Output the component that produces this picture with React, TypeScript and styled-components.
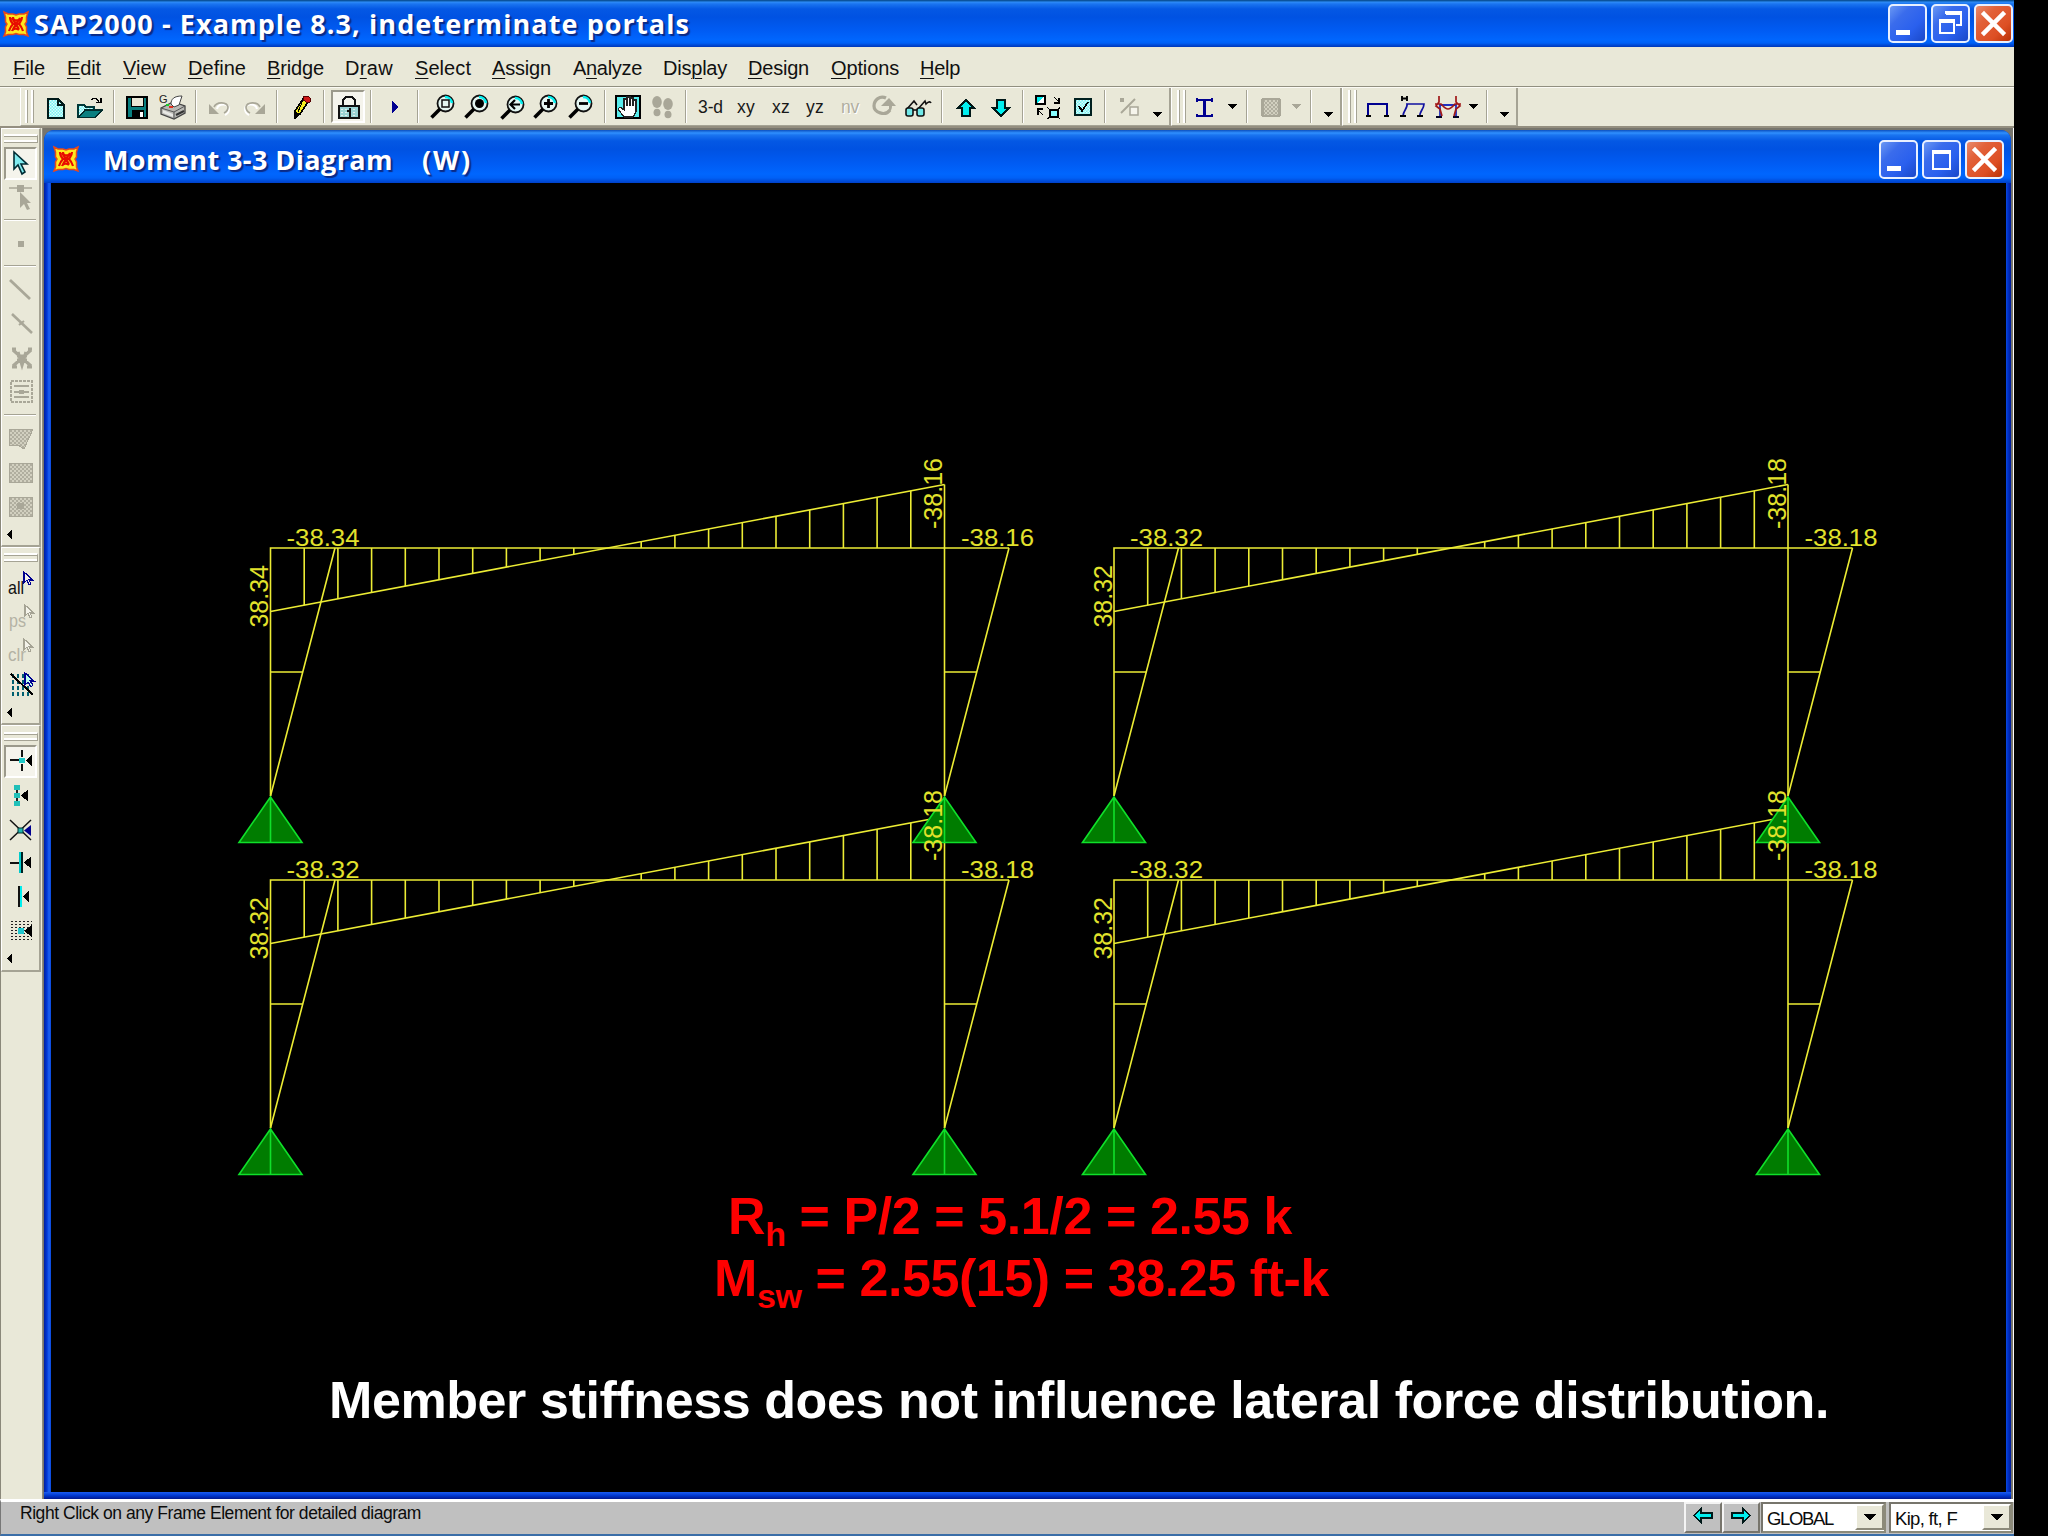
import React, { ReactNode, useLayoutEffect, useRef, useState } from 'react';
import styled, { createGlobalStyle, css } from 'styled-components';

const SANS = '"Liberation Sans", Arial, sans-serif';
const CAPTION = '"Open Sans", "Noto Sans", sans-serif';
const FACE = '#e9e8d8';
const SHADE = '#a5a394';
const GREY = '#a9a798';
const CYAN = '#00f0f0';
const NAVY = '#000090';

const Global = createGlobalStyle`
  html, body { margin: 0; padding: 0; background: #000; overflow: hidden; }
  * { box-sizing: border-box; }
`;

/* ---------- text tracked out to a given width ---------- */

const FitSpan = styled.span`
  display: inline-block;
  white-space: pre;
`;

function Fit({ width, children }: { width: number; children: ReactNode }) {
  const ref = useRef<HTMLSpanElement>(null);
  const [spacing, setSpacing] = useState(0);
  useLayoutEffect(() => {
    const el = ref.current;
    if (!el) return;
    const count = (el.textContent || '').length || 1;
    el.style.letterSpacing = '0px';
    const value = (width - el.getBoundingClientRect().width) / count;
    el.style.letterSpacing = value + 'px';
    setSpacing(value);
  }, [width]);
  return <FitSpan ref={ref} style={{ letterSpacing: spacing }}>{children}</FitSpan>;
}

/* Turns start/size pairs into the gap that precedes each item. */
type Item = { at: number; size: number; node: ReactNode };
const withGaps = <T extends { at: number; size: number }>(items: T[], origin: number) => {
  let end = origin;
  return items.map((item) => {
    const gap = item.at - end;
    end = item.at + item.size;
    return { ...item, gap };
  });
};

/* ---------- shell ---------- */

const Screen = styled.div`
  width: 2048px;
  height: 1536px;
  background: #000;
  font-family: ${SANS};
`;

const AppWindow = styled.div`
  width: 2014px;
  height: 1536px;
  display: flex;
  flex-direction: column;
  background: ${FACE};
`;

const TitleBar = styled.header`
  height: 47px;
  flex: none;
  display: flex;
  align-items: center;
  padding: 0 1px 0 4px;
  background: linear-gradient(#0b4c90 0, #0b5aa8 1px, #2f8cf8 2px, #1a74f0 4px, #0458e4 9px, #0052e2 17px, #005cf4 31px, #0066fe 40px, #0060f6 43px, #0040c8 46px, #0038b8 47px);
`;

const Caption = styled.div<{ $gap: number }>`
  margin-left: ${(p) => p.$gap}px;
  font: 700 27px/40px ${CAPTION};
  color: #fff;
  text-shadow: 2px 2px 1px #0a2a86;
  white-space: pre;
`;

const ChildCaptions = styled.div`
  display: flex;
  padding-top: 2px;
`;

const WindowButtons = styled.div`
  display: flex;
  gap: 4px;
  margin-left: auto;
`;

const WindowButton = styled.button<{ $close?: boolean }>`
  width: 39px;
  height: 39px;
  padding: 0;
  border: 2px solid #e8f0ff;
  border-radius: 5px;
  display: block;
  background: ${(p) =>
    p.$close
      ? 'linear-gradient(135deg, #e88a6c 0, #e2623a 30%, #dd4f24 70%, #b83208 100%)'
      : 'linear-gradient(135deg, #6a98f4 0, #3a6cec 30%, #2a60ee 65%, #1a48c8 100%)'};
`;

const MenuBar = styled.nav`
  height: 40px;
  flex: none;
  display: flex;
  align-items: center;
  padding-top: 3px;
  border-bottom: 1px solid #918f80;
  font-size: 20px;
  color: #111;
`;

const Gap = styled.div<{ $gap: number; $size: number }>`
  margin-left: ${(p) => p.$gap}px;
  width: ${(p) => p.$size}px;
  flex: none;
  white-space: nowrap;
`;

const Key = styled.span`
  text-decoration: underline;
  text-decoration-thickness: 1px;
  text-underline-offset: 3px;
`;

const ToolArea = styled.div`
  height: 41px;
  flex: none;
  display: flex;
  padding-left: 20px;
  border-top: 1px solid #fbfaf4;
  border-bottom: 2px solid #948f80;
`;

const Strip = styled.div<{ $width: number }>`
  width: ${(p) => p.$width}px;
  height: 38px;
  flex: none;
  display: flex;
  align-items: center;
  border-left: 1px solid #fff;
  border-right: 2px solid ${SHADE};
  border-bottom: 1px solid ${SHADE};
`;

const Tool = styled.div<{ $gap: number; $size: number }>`
  margin-left: ${(p) => p.$gap}px;
  width: ${(p) => p.$size}px;
  flex: none;
  display: flex;
  align-items: center;
  justify-content: center;
`;

const Divider = styled.i`
  width: 2px;
  height: 33px;
  border-left: 1px solid ${SHADE};
  border-right: 1px solid #fff;
`;

const Grip = styled.i`
  width: 9px;
  height: 33px;
  border: solid #fff;
  border-width: 0 0 0 2px;
  box-shadow: inset -1px 0 0 ${SHADE}, inset -3px 0 0 #fff, inset 1px 0 0 ${SHADE};
`;

const pressed = css`
  background: #f5f4ec;
  border: 2px solid;
  border-color: #9b998b #fff #fff #9b998b;
`;

const PressedTool = styled.div`
  ${pressed}
  width: 34px;
  height: 33px;
  padding-left: 2px;
  display: flex;
  align-items: center;
  justify-content: center;
`;

const ToolText = styled.span<{ $off?: boolean }>`
  font-size: 17.5px;
  line-height: 26px;
  color: ${(p) => (p.$off ? '#b0ae9f' : '#181818')};
  text-shadow: ${(p) => (p.$off ? '1px 1px 0 #fff' : 'none')};
`;

const Body = styled.div`
  display: flex;
  height: 1371px;
  flex: none;
`;

const SideBar = styled.aside`
  width: 42px;
  flex: none;
  display: flex;
  flex-direction: column;
  border-left: 1px solid #8a887a;
`;

const SidePanel = styled.div<{ $height: number }>`
  height: ${(p) => p.$height}px;
  width: 40px;
  flex: none;
  display: flex;
  flex-direction: column;
  border-top: 1px solid #fff;
  border-left: 1px solid #fff;
  border-right: 2px solid ${SHADE};
  border-bottom: 2px solid ${SHADE};
`;

const SideTool = styled.div<{ $gap: number; $size: number; $left: number }>`
  margin-top: ${(p) => p.$gap}px;
  margin-left: ${(p) => p.$left - 2}px;
  height: ${(p) => p.$size}px;
  flex: none;
  display: flex;
`;

const SideGrip = styled.i`
  width: 34px;
  height: 9px;
  border-top: 2px solid #fff;
  border-right: 1px solid ${SHADE};
  box-shadow: inset 0 1px 0 ${SHADE}, inset 0 -1px 0 ${SHADE}, inset 0 -3px 0 #fff;
`;

const SideRule = styled.i`
  width: 32px;
  height: 2px;
  background: ${SHADE};
  border-bottom: 1px solid #fff;
`;

const SidePressed = styled.div`
  ${pressed}
  width: 33px;
  height: 33px;
  padding: 1px 0 0 4px;
`;

const Mdi = styled.main`
  flex: 1;
  padding: 2px 2px 0 1px;
  border-left: 1px solid #8c8a80;
  border-right: 1px solid #fff;
  background: #77756c;
`;

const ChildWindow = styled.section`
  width: 1967px;
  height: 1369px;
  display: flex;
  flex-direction: column;
  border-radius: 10px 10px 0 0;
  background: linear-gradient(90deg, #0020a0 0, #0038d8 3px, #1d62f2 5px, #0a48dc 7px, #0038d0 50%, #0a4ae0 1962px, #0030c8 1964px, #001c98 1967px);
  overflow: hidden;
`;

const ChildTitle = styled.div`
  height: 53px;
  flex: none;
  display: flex;
  align-items: center;
  padding: 5px 7px 0 10px;
  background: linear-gradient(#0b50c0 0, #3090ff 3px, #1a74f0 5px, #0458e4 11px, #0052e2 19px, #005cf4 34px, #0066fe 44px, #0060f6 48px, #0040c8 53px);
`;

const Viewport = styled.div`
  margin-left: 7px;
  width: 1955px;
  height: 1309px;
  flex: none;
  display: grid;
  grid-template: 1309px / 1955px;
  background: #000;
  > * {
    grid-area: 1 / 1;
  }
`;

const ChildFoot = styled.div`
  height: 7px;
  background: linear-gradient(#1a5cf0, #0038d0 50%, #001890);
`;

const Notes = styled.div`
  padding-top: 1002px;
  font-weight: 700;
  font-size: 52px;
  line-height: 62px;
`;

const Note = styled.p<{ $left: number; $top?: number; $color: string }>`
  margin: ${(p) => p.$top || 0}px 0 0 ${(p) => p.$left}px;
  height: 62px;
  color: ${(p) => p.$color};
  white-space: pre;
`;

const Sub = styled.span`
  font-size: 34px;
  line-height: 0;
  vertical-align: -12px;
`;

const StatusBar = styled.footer`
  height: 37px;
  flex: none;
  display: flex;
  padding-right: 1px;
  border-top: 3px solid #fff;
  border-bottom: 2px solid #3a6ea8;
  background: #c0c0c0;
  border-left: 1px solid #777;
`;

const StatusText = styled.div`
  flex: 1;
  padding-left: 19px;
  font-size: 17.5px;
  line-height: 22px;
  color: #0c0c0c;
`;

const StatusButton = styled.div`
  width: 38px;
  height: 31px;
  display: flex;
  justify-content: center;
  padding: 3px 1px 0 0;
  border: 2px solid;
  border-color: #f4f4f4 #77756c #77756c #f4f4f4;
`;

const Combo = styled.div<{ $width: number; $gap: number }>`
  width: ${(p) => p.$width}px;
  height: 31px;
  margin-left: ${(p) => p.$gap}px;
  display: flex;
  justify-content: space-between;
  border: 2px solid;
  border-color: #77756c #8c8a7a #8c8a7a #77756c;
  padding-left: 4px;
  background: #fff;
  font-size: 18.5px;
  line-height: 30px;
  color: #0c0c0c;
`;

const ComboButton = styled.div`
  width: 29px;
  height: 26px;
  display: flex;
  align-items: center;
  justify-content: center;
  background: ${FACE};
  border: 2px solid;
  border-color: #fff #8c8a7a #8c8a7a #fff;
`;

/* ---------- icons ---------- */

const Drawing = styled.svg`
  display: block;
  flex: none;
  overflow: visible;
`;

const Ico = ({ w = 26, h = 26, soft, children }: { w?: number; h?: number; soft?: boolean; children: ReactNode }) => (
  <Drawing width={w} height={h} viewBox={`0 0 ${w} ${h}`} fill="none" shapeRendering={soft ? 'auto' : 'crispEdges'}>
    {children}
  </Drawing>
);

const PatternStore = styled.svg`
  position: absolute;
  width: 0;
  height: 0;
`;

const Patterns = () => (
  <PatternStore>
    <defs>
      <pattern id="aqua" width="3" height="3" patternUnits="userSpaceOnUse">
        <rect width="3" height="3" fill="#74f4f4" />
        <rect width="1.5" height="1.5" fill="#dffcfc" />
        <rect x="1.5" y="1.5" width="1.5" height="1.5" fill="#dffcfc" />
      </pattern>
      <pattern id="mesh" width="4" height="4" patternUnits="userSpaceOnUse">
        <rect width="4" height="4" fill="#d2d0c0" />
        <rect width="2" height="2" fill="#b0ae9f" />
        <rect x="2" y="2" width="2" height="2" fill="#b0ae9f" />
      </pattern>
    </defs>
  </PatternStore>
);

const AppIcon = () => (
  <Ico w={24} h={24} soft>
    <path d="M0 0 4 2h5l3 1 3-1h5l4-2-1.500 5v5L21 12l1.500 3v5L24 24l-4-1.500h-5l-3-1-3 1H4L0 24l1.500-4v-5L3 12 1.500 10V5z" fill="#ffe81e" stroke="#e8481c" strokeWidth="1.500" />
    <path d="M6 5c0 3 1 5 3 7-2 2-3 4-4 7M18 5c0 3-2 5-3 7 2 2 3 4 4 7M9 5c0 3 2 4 5 3M8 19c1-3 5-3 7-1M8 12h7M8 6l7 11M16 6 9 17" stroke="#e80c00" strokeWidth="2.200" />
  </Ico>
);

const MinIcon = () => (
  <Ico w={35} h={35}><rect x="6" y="24" width="14" height="5" fill="#fff" /></Ico>
);
const MaxIcon = () => (
  <Ico w={35} h={35}><path d="M9 11V27H26V11" stroke="#fff" strokeWidth="2" /><rect x="8" y="8" width="19" height="4" fill="#fff" /></Ico>
);
const RestoreIcon = () => (
  <Ico w={35} h={35}>
    <path d="M13 8V5.500h15V19h-5M13 7h15" stroke="#fff" strokeWidth="2" />
    <path d="M6 14h16M7 14v12.500h14V14" stroke="#fff" strokeWidth="2" />
    <path d="M13 6.500h15M6 14.500h16" stroke="#fff" strokeWidth="4" />
  </Ico>
);
const CloseIcon = () => (
  <Ico w={35} h={35} soft><path d="M8 8 27 27M27 8 8 27" stroke="#fff" strokeWidth="4.500" strokeLinecap="square" /></Ico>
);

const NewIcon = () => (
  <Ico w={18}><path d="M1 5h10l6 6v13H1z" fill="url(#aqua)" stroke="#001a1a" strokeWidth="1.600" /><path d="M11 5v6h6" stroke="#001a1a" strokeWidth="1.500" /></Ico>
);
const OpenIcon = () => (
  <Ico w={26}>
    <path d="M1 23V11h6l2 2h8v4" fill="url(#aqua)" stroke="#003838" strokeWidth="1.500" />
    <path d="M1 23.500 8 16h17l-7 7.500z" fill="#087f7f" stroke="#002c2c" strokeWidth="1.500" />
    <path d="M14 6c3-3 7-2 8 3M19 8.500h5V4" stroke="#000" strokeWidth="1.500" />
  </Ico>
);
const SaveIcon = () => (
  <Ico w={22}>
    <path d="M1 3h20v21H1z" fill="#087f7f" stroke="#000" strokeWidth="2" />
    <path d="M5 3h12v9H5z" fill={FACE} stroke="#000" />
    <path d="M6 16h12v8H6z" fill="#000" /><path d="M14 18h3v5h-3z" fill="#fff" />
  </Ico>
);
const PrintIcon = () => (
  <Ico w={27} soft>
    <path d="M2 14 14 8l12 4v7l-11 6L2 20z" fill="#b9b9b4" stroke="#444" strokeWidth="1.300" />
    <path d="m2 14 13 4 11-6M15 18v7" stroke="#555" />
    <path d="M12 10c0-5 3-8 11-8l-3 9-5 2z" fill="#fff" stroke="#444" />
    <path d="m4 16 10 4v3L4 19z" fill="#e8e8e4" />
    <path d="M7 11h3" stroke="#1cc828" strokeWidth="2" /><path d="M10 13h4" stroke="#e03020" strokeWidth="2" />
    <path d="m17 21 8-4" stroke="#333" strokeWidth="2" />
    <text x="0" y="9" fontFamily={SANS} fontSize="11" fill="#222">G</text>
  </Ico>
);
const UndoIcon = ({ flip }: { flip?: boolean }) => (
  <Ico w={21} soft>
    <g transform={flip ? 'matrix(-1 0 0 1 21 0)' : undefined}>
      <path d="M7 14c1-6 12-6 12 0 0 3-2 5-4 6" stroke="#fff" strokeWidth="2" transform="translate(1 1)" />
      <path d="M5 13c3-6 13-5 14 0 0 3-2 5-4 6" stroke={GREY} strokeWidth="1.700" />
      <path d="M0 10v10h10z" fill={GREY} />
    </g>
  </Ico>
);
const PencilIcon = () => (
  <Ico w={17}>
    <path d="M10 5 2 17v7l5-4 8-12z" fill="#f4ee20" stroke="#000" strokeWidth="1.600" />
    <path d="M2 17v7l5-4z" fill="#000" /><path d="M10 6 5 18" stroke="#000" />
    <path d="M10 2h5l2 2v4l-2 1-5-3z" fill="#d01818" stroke="#500" />
  </Ico>
);
const LockIcon = () => (
  <Ico w={22}>
    <path d="M5 12V6l3-3h6l3 3v6" stroke="#111" strokeWidth="2" />
    <path d="M1 12h20v12H1z" fill="#9cd4d4" stroke="#111" strokeWidth="1.600" />
    <path d="M3 15h16M3 18h16M3 21h16" stroke="#e4f0ee" strokeDasharray="2 2" /><path d="M12 14v9M9 17h3" stroke="#111" strokeWidth="2" />
  </Ico>
);
const RunIcon = () => <Ico w={7}><path d="m0 7 7 6-7 6z" fill={NAVY} /></Ico>;

const Lens = ({ children, dy = 0 }: { children: ReactNode; dy?: number }) => (
  <Ico w={25} soft>
    <g transform={`translate(0 ${dy})`}>
      <circle cx="15.500" cy="9.500" r="8" fill="#e4f6f2" stroke="#111" strokeWidth="1.800" />
      <path d="M15 3a7 7 0 0 1 7 6" stroke={CYAN} strokeWidth="2.500" />
      <path d="m10 15-8.500 8.500" stroke="#000" strokeWidth="3.500" />
      {children}
    </g>
  </Ico>
);
const HandIcon = () => (
  <Ico w={26}>
    <path d="M1 2h24v22H1z" fill="#58ecec" stroke="#000" strokeWidth="1.600" />
    <path d="M9 23 3 15l2-2 4 3V5h3v7-9h3v9-8h3v8-6h3v12l-3 5z" fill="#fff" stroke="#222" strokeWidth="1.200" />
  </Ico>
);
const FeetIcon = () => (
  <Ico w={22} soft>
    <g fill={GREY}>
      <ellipse cx="5" cy="8" rx="4.800" ry="6" /><ellipse cx="5" cy="18.500" rx="3.500" ry="3.800" />
      <ellipse cx="16" cy="10" rx="4.800" ry="6" /><ellipse cx="16" cy="20.500" rx="3.500" ry="3.800" />
    </g>
  </Ico>
);
const RotateIcon = () => (
  <Ico w={24} soft>
    <path d="M14 4C8 1 2 6 2 12s11 11 16 4" stroke={GREY} strokeWidth="3.200" />
    <path d="m9 12 8-8 7 8h-4c0 3-1 5-3 6v-6z" fill={GREY} />
  </Ico>
);
const GlassesIcon = () => (
  <Ico w={27} soft>
    <path d="M2 15 9 7l3 4M13 15l7-8 1 3c2-2 4-3 5-1" stroke="#111" strokeWidth="1.600" />
    <rect x="1" y="14" width="7" height="8" rx="2" fill="#70e8e8" stroke="#111" strokeWidth="1.600" />
    <rect x="12" y="14" width="7" height="8" rx="2" fill="#70e8e8" stroke="#111" strokeWidth="1.600" />
    <path d="M8 16h4" stroke="#111" strokeWidth="1.600" />
  </Ico>
);
const ArrowIcon = ({ down }: { down?: boolean }) => (
  <Ico w={18}>
    <path d="M9 6 1 14h4v8h8v-8h4z" fill={CYAN} stroke="#001818" strokeWidth="1.600" transform={down ? 'rotate(180 9 14)' : undefined} />
  </Ico>
);
const ShrinkIcon = () => (
  <Ico w={26}>
    <path d="M1 2h9v8H1z" fill="#fff" stroke="#000" strokeWidth="1.500" /><path d="M2 3h7L2 9z" fill={CYAN} />
    <path d="M15 16h8v7h-8z" fill="#8ff" stroke="#000" strokeWidth="1.500" />
    <path d="m12 13 3 3M25 13l-2 3M12 25l3-2M25 25l-2-2M19 3l5 5M24 4v5h-5M8 21l-5-5M3 21v-6h5" stroke="#000" strokeWidth="1.400" />
  </Ico>
);
const CheckIcon = () => (
  <Ico w={18}><path d="M1 5h16v16H1z" fill="url(#aqua)" stroke="#002020" strokeWidth="2" /><path d="m5 12 3 5 6-9" stroke="#000" strokeWidth="1.800" /></Ico>
);
const AssignOffIcon = () => (
  <Ico w={21} soft>
    <path d="m2 19 14-14" stroke={GREY} strokeWidth="2" /><path d="M1 4h4v4H1z" fill={GREY} />
    <path d="M11 13h8v8h-8z" fill="#f6f5ec" stroke={GREY} strokeWidth="1.500" />
  </Ico>
);
const Caret = ({ low, off }: { low?: boolean; off?: boolean }) => (
  <Ico w={9}><path d={low ? 'M0 18h9l-4.500 5.500z' : 'M0 10h9l-4.500 5.500z'} fill={off ? GREY : '#000'} /></Ico>
);
const BeamIcon = () => (
  <Ico w={17}><path d="M0 5.500h17M0 22h17M1 4v4M16 4v4M1 23v-3M16 23v-3" stroke={NAVY} strokeWidth="2" /><path d="M8.500 5v17" stroke={NAVY} strokeWidth="3" /></Ico>
);
const AreaOffIcon = () => (
  <Ico w={20}><rect x="1.500" y="5" width="17" height="17" rx="1" fill="url(#mesh)" stroke={GREY} strokeWidth="2.500" /></Ico>
);
const PortalIcon = () => (
  <Ico w={23}><path d="M2 22V10h19v12" stroke={NAVY} strokeWidth="1.600" /><path d="M0 22h5M18 22h5" stroke="#000" strokeWidth="2" /></Ico>
);
const DeformedIcon = () => (
  <Ico w={26} soft>
    <path d="M3 22C3 17 8 14 7 10h17c0 5-5 8-4 12" stroke="#1010a0" strokeWidth="1.700" />
    <path d="M0 22h6M17 22h6M2 2v5M7 2v5M2 4.500h5" stroke="#000" strokeWidth="1.900" />
  </Ico>
);
const ForcesIcon = () => (
  <Ico w={26} soft>
    <path d="M5 23V11h16v12" stroke="#2030c0" strokeWidth="1.800" /><path d="M1 23h6M18 23h6" stroke="#002" strokeWidth="2" />
    <path d="M4 2v6l-3 4 4 3 2 7M21 2v6l4 4-4 3-2 7M0 10h6c2 2 4 5 7 5s5-3 7-5h6" stroke="#a01818" strokeWidth="1.700" />
  </Ico>
);
const LockButton = () => <PressedTool><LockIcon /></PressedTool>;

/* ---------- tool bar contents ---------- */

const sep = (at: number): Item => ({ at, size: 2, node: <Divider /> });
const grip = (at: number): Item => ({ at, size: 9, node: <Grip /> });
const word = (at: number, size: number, text: string, off = false): Item => ({
  at, size, node: <ToolText $off={off}><Fit width={size}>{text}</Fit></ToolText>,
});

const mainTools: Item[] = [
  grip(25),
  { at: 47, size: 18, node: <NewIcon /> },
  { at: 77, size: 26, node: <OpenIcon /> },
  sep(113),
  { at: 126, size: 22, node: <SaveIcon /> },
  { at: 159, size: 27, node: <PrintIcon /> },
  sep(195),
  { at: 209, size: 21, node: <UndoIcon /> },
  { at: 244, size: 21, node: <UndoIcon flip /> },
  sep(276),
  { at: 293, size: 17, node: <PencilIcon /> },
  sep(323),
  { at: 331, size: 34, node: <LockButton /> },
  sep(370),
  { at: 392, size: 7, node: <RunIcon /> },
  sep(417),
  { at: 430, size: 25, node: <Lens><path d="M12 6h7v7h-7z" stroke="#111" strokeWidth="1.500" /></Lens> },
  { at: 464, size: 25, node: <Lens><circle cx="15.500" cy="9.500" r="4.500" fill="#000" /></Lens> },
  { at: 500, size: 25, node: <Lens dy={1}><path d="M11 9.500h9M15 5l-4.500 4.500L15 14" stroke="#000" strokeWidth="2.200" /></Lens> },
  { at: 533, size: 25, node: <Lens><path d="M11 9.500h9M15.500 5v9" stroke="#000" strokeWidth="2.800" /></Lens> },
  { at: 568, size: 25, node: <Lens><path d="M11 9.500h9" stroke="#000" strokeWidth="2.800" /></Lens> },
  sep(604),
  { at: 615, size: 26, node: <HandIcon /> },
  { at: 652, size: 22, node: <FeetIcon /> },
  sep(685),
  word(698, 25, '3-d'),
  word(737, 18, 'xy'),
  word(772, 18, 'xz'),
  word(806, 18, 'yz'),
  word(841, 18, 'nv', true),
  { at: 872, size: 24, node: <RotateIcon /> },
  { at: 905, size: 27, node: <GlassesIcon /> },
  sep(941),
  { at: 957, size: 18, node: <ArrowIcon /> },
  { at: 992, size: 18, node: <ArrowIcon down /> },
  sep(1022),
  { at: 1035, size: 26, node: <ShrinkIcon /> },
  { at: 1074, size: 18, node: <CheckIcon /> },
  sep(1104),
  { at: 1119, size: 21, node: <AssignOffIcon /> },
  { at: 1153, size: 9, node: <Caret low /> },
];
const sectionTools: Item[] = [
  grip(1177),
  { at: 1196, size: 17, node: <BeamIcon /> },
  { at: 1228, size: 9, node: <Caret /> },
  sep(1246),
  { at: 1261, size: 20, node: <AreaOffIcon /> },
  { at: 1292, size: 9, node: <Caret off /> },
  sep(1310),
  { at: 1324, size: 9, node: <Caret low /> },
];
const displayTools: Item[] = [
  grip(1348),
  { at: 1366, size: 23, node: <PortalIcon /> },
  { at: 1400, size: 26, node: <DeformedIcon /> },
  { at: 1435, size: 26, node: <ForcesIcon /> },
  { at: 1469, size: 9, node: <Caret /> },
  sep(1486),
  { at: 1500, size: 9, node: <Caret low /> },
];

const ToolStrip = ({ items, from, to }: { items: Item[]; from: number; to: number }) => (
  <Strip $width={to - from}>
    {withGaps(items, from + 1).map((t) => (
      <Tool key={t.at} $gap={t.gap} $size={t.size}>{t.node}</Tool>
    ))}
  </Strip>
);

/* ---------- side bar contents ---------- */

type SideItem = Item & { left: number };
const sideSep = (at: number): SideItem => ({ at, size: 2, left: 4, node: <SideRule /> });
const sideGrip = (at: number): SideItem => ({ at, size: 9, left: 4, node: <SideGrip /> });
const sideIcon = (at: number, left: number, w: number, h: number, soft: boolean, node: ReactNode): SideItem => ({
  at, size: h, left, node: <Ico w={w} h={h} soft={soft}>{node}</Ico>,
});
const back = (at: number): SideItem => sideIcon(at, 7, 6, 9, false, <path d="M5 0v9L0 4.500z" fill="#000" />);

const Pointer = ({ color }: { color: string }) => (
  <path d="M16 0v11l3-3 2 5 2-1-2-4h4z" fill="#f4f3ea" stroke={color} strokeWidth="1.200" />
);
const SelectWord = ({ text, size, off }: { text: string; size: number; off?: boolean }) => (
  <>
    <text x="0" y="22" fontFamily={SANS} fontSize="18.500" textLength={size} lengthAdjust="spacingAndGlyphs" fill={off ? '#b4b2a4' : '#111'}>{text}</text>
    <Pointer color={off ? '#a5a394' : NAVY} />
  </>
);

const drawTools: SideItem[] = [
  sideGrip(134),
  { at: 147, size: 33, left: 4, node: (
    <SidePressed>
      <Ico w={18} h={24} soft><path d="M4 2v17l4-4 4 9 3-2-4-8h6z" fill="#80ecf0" stroke="#002c34" strokeWidth="1.600" /></Ico>
    </SidePressed>
  ) },
  sideIcon(185, 9, 24, 26, true, <><path d="M0 3h23" stroke={GREY} strokeWidth="1.500" /><path d="M8 0h7v7H8zM11 7v16l4-4 3 6 3-1-3-6h4z" fill={GREY} /></>),
  sideSep(219),
  sideIcon(241, 18, 6, 6, false, <path d="M0 0h6v6H0z" fill={GREY} />),
  sideSep(265),
  sideIcon(279, 10, 22, 22, true, <path d="m0 1 20 19" stroke={GREY} strokeWidth="2.800" />),
  sideIcon(313, 11, 22, 22, true, <><path d="m1 1 20 19" stroke={GREY} strokeWidth="2.600" /><path d="m8 12 5-4" stroke={GREY} strokeWidth="2" /></>),
  sideIcon(348, 11, 22, 21, true, <path d="m2 2 18 16M20 2 2 18M7 4l4 13 4-13M1 1h4M17 1h4M1 19h5M16 19h5M6 8h10M6 12h10" stroke={GREY} strokeWidth="3.200" />),
  sideIcon(380, 10, 24, 24, false, <><path d="M1 1h21v21H1z" stroke={GREY} strokeWidth="2" strokeDasharray="3 1" /><path d="M4 6h15M4 12h15M4 17h15" stroke={GREY} strokeWidth="1.500" /><path d="M9 10h5v4H9z" fill={GREY} /></>),
  sideSep(414),
  sideIcon(428, 8, 26, 23, false, <path d="M1 1h24l-9 20-6-4H1z" fill="url(#mesh)" stroke={GREY} />),
  sideIcon(462, 8, 25, 21, false, <path d="M1 1h23v19H1z" fill="url(#mesh)" stroke={GREY} />),
  sideIcon(496, 8, 25, 21, false, <><path d="M1 1h23v19H1z" fill="url(#mesh)" stroke={GREY} /><path d="M9 7h7v6H9z" fill={GREY} /></>),
  back(530),
];
const pickTools: SideItem[] = [
  sideGrip(553),
  sideIcon(572, 8, 26, 24, false, <SelectWord text="all" size={16} />),
  sideIcon(605, 9, 26, 24, false, <SelectWord text="ps" size={17} off />),
  sideIcon(639, 8, 26, 24, false, <SelectWord text="clr" size={18} off />),
  sideIcon(673, 10, 26, 24, false, <>
    <path d="M3 1v22M8 1v22M13 1v22M18 1v22" stroke="#006070" strokeWidth="1.600" strokeDasharray="4 2" />
    <path d="m1 1 22 21" stroke="#000" strokeWidth="2" /><path d="M15 0v12l3-3 3 5 2-2-3-4h4z" fill="#bfe" stroke={NAVY} strokeWidth="1.300" />
  </>),
  back(708),
];
const snapTools: SideItem[] = [
  sideGrip(732),
  { at: 745, size: 33, left: 4, node: (
    <SidePressed>
      <Ico w={24} h={24}>
        <path d="M0 12h9M12 2v7M12 16v7" stroke="#111" strokeWidth="1.700" /><path d="M9 10h6v5H9z" fill="#20c8c8" /><path d="M16 12.500 22 7v11z" fill="#000" />
      </Ico>
    </SidePressed>
  ) },
  sideIcon(785, 14, 15, 21, false, <><path d="M3 0v21" stroke="#222" strokeWidth="1.500" /><path d="M0 0h6v5H0zM0 8h6v5H0zM0 16h6v5H0z" fill="#20c0b8" /><path d="m7 10.500 7-6v12z" fill="#000" /></>),
  sideIcon(820, 10, 22, 21, true, <><path d="m0 0 21 20M21 0 0 20" stroke="#111" strokeWidth="1.500" /><path d="M8 8h5v5H8z" fill="#20b8b0" stroke="#033" /><path d="M14 10.500 21 5v11z" fill={NAVY} /></>),
  sideIcon(852, 10, 22, 21, false, <><path d="M0 11h10" stroke="#111" strokeWidth="1.700" /><path d="M10 0v21" stroke="#0cc" strokeWidth="2" /><path d="M12 0v21" stroke="#022" strokeWidth="1.500" /><path d="m14 10.500 7-6v12z" fill="#000" /></>),
  sideIcon(886, 18, 12, 21, false, <><path d="M1 0v21" stroke="#111" strokeWidth="2" /><path d="M3 0v21" stroke="#0ee" strokeWidth="1.600" /><path d="m5 10.500 6-5.500v11z" fill="#000" /></>),
  sideIcon(920, 11, 22, 22, false, <>
    {[1, 4, 7, 10, 13, 16, 19].map((y) => <path key={y} d={`M0 ${y + 0.5}h21`} stroke="#222" strokeWidth="1.400" strokeDasharray="2 2" />)}
    <path d="M7 8h6v6H7z" fill="#20c8d0" /><path d="m13 11 8-6v12z" fill="#000" />
  </>),
  back(954),
];

const SideGroup = ({ items, from, to }: { items: SideItem[]; from: number; to: number }) => (
  <SidePanel $height={to - from}>
    {withGaps(items, from + 1).map((t) => (
      <SideTool key={t.at} $gap={t.gap} $size={t.size} $left={t.left}>{t.node}</SideTool>
    ))}
  </SidePanel>
);

/* ---------- menu ---------- */

const menus: [number, number, string, number][] = [
  [13, 32, 'File', 0], [67, 34, 'Edit', 0], [123, 43, 'View', 0], [188, 58, 'Define', 0],
  [267, 57, 'Bridge', 0], [345, 48, 'Draw', 1], [415, 56, 'Select', 0], [492, 59, 'Assign', 0],
  [573, 69, 'Analyze', 1], [663, 64, 'Display', 3], [748, 61, 'Design', 0], [831, 68, 'Options', 0], [920, 40, 'Help', 0],
];

/* ---------- moment diagram ---------- */

const YEL = '#ecec34';
const SPAN = 674;
const HEIGHT = 248;
const ARM = 64.5;
const PEAK = 63.5;

type Portal = { x: number; y: number; left: string; right: string };
const portals: Portal[] = [
  { x: 219.5, y: 365, left: '38.34', right: '-38.16' },
  { x: 1063, y: 365, left: '38.32', right: '-38.18' },
  { x: 219.5, y: 697, left: '38.32', right: '-38.18' },
  { x: 1063, y: 697, left: '38.32', right: '-38.18' },
];

const Frame = ({ x, y }: Portal) => {
  const ticks = Array.from({ length: 19 }, (_, i) => i + 1).filter((i) => i !== 10);
  return (
    <g transform={`translate(${x} ${y})`} stroke={YEL} strokeWidth="1.600" fill="none">
      <path d={`M0 ${HEIGHT}V0H${SPAN + ARM}M${SPAN} ${HEIGHT}V${-PEAK}`} />
      <path d={`M0 ${PEAK}L${SPAN} ${-PEAK}`} />
      <path d={`M0 ${HEIGHT}L${ARM} 0M${SPAN} ${HEIGHT}L${SPAN + ARM} 0`} />
      <path d={`M0 124H${ARM / 2}M${SPAN} 124h${ARM / 2}`} />
      {ticks.map((i) => {
        const tx = (SPAN * i) / 20;
        return <path key={i} d={`M${tx} 0V${PEAK - (2 * PEAK * i) / 20}`} />;
      })}
    </g>
  );
};

const Supports = ({ x, y }: Portal) => (
  <g transform={`translate(${x} ${y + HEIGHT})`} stroke="#0fe02a" strokeWidth="1.600" fill="#007c00">
    {[0, SPAN].map((dx) => (
      <path key={dx} d={`M${dx} 1l31.500 45.500h-63zv45.500`} />
    ))}
  </g>
);

const Values = ({ x, y, left, right }: Portal) => (
  <g transform={`translate(${x} ${y})`} fill="#e2e22c" fontFamily={SANS}>
    <text x="16" y="-2" fontSize="23.500" textLength="73" lengthAdjust="spacingAndGlyphs">{'-' + left}</text>
    <text x={SPAN + 16.5} y="-2" fontSize="23.500" textLength="73" lengthAdjust="spacingAndGlyphs">{right}</text>
    <text transform="translate(-2.500 79.500) rotate(-90)" fontSize="25" textLength="62.500">{left}</text>
    <text transform={`translate(${SPAN - 2.5} -19) rotate(-90)`} fontSize="25" textLength="71">{right}</text>
  </g>
);

const Diagram = () => (
  <svg width="1955" height="1309" viewBox="0 0 1955 1309">
    {portals.map((p) => <Frame key={`f${p.x}-${p.y}`} {...p} />)}
    {portals.map((p) => <Supports key={`s${p.x}-${p.y}`} {...p} />)}
    {portals.map((p) => <Values key={`v${p.x}-${p.y}`} {...p} />)}
  </svg>
);

const StepArrow = ({ right }: { right?: boolean }) => (
  <Ico w={20} h={17}>
    <path d="M1 8.500 8 2v4h11v5H8v4z" fill={CYAN} stroke="#001818" strokeWidth="1.600" transform={right ? 'rotate(180 10 8.500)' : undefined} />
  </Ico>
);
const DropMark = () => <Ico w={12} h={7}><path d="M0 0h12L6 7z" fill="#000" /></Ico>;

export default function App() {
  return (
    <Screen>
      <Global />
      <Patterns />
      <AppWindow>
        <TitleBar>
          <AppIcon />
          <Caption $gap={6}><Fit width={656}>SAP2000 - Example 8.3, indeterminate portals</Fit></Caption>
          <WindowButtons>
            <WindowButton><MinIcon /></WindowButton>
            <WindowButton><RestoreIcon /></WindowButton>
            <WindowButton $close><CloseIcon /></WindowButton>
          </WindowButtons>
        </TitleBar>
        <MenuBar>
          {withGaps(menus.map(([at, size, text, key]) => ({
            at, size,
            node: <Fit width={size}>{text.slice(0, key)}<Key>{text[key]}</Key>{text.slice(key + 1)}</Fit>,
          })), 0).map((m) => (
            <Gap key={m.at} $gap={m.gap} $size={m.size}>{m.node}</Gap>
          ))}
        </MenuBar>
        <ToolArea>
          <ToolStrip items={mainTools} from={20} to={1171} />
          <ToolStrip items={sectionTools} from={1171} to={1342} />
          <ToolStrip items={displayTools} from={1342} to={1518} />
        </ToolArea>
        <Body>
          <SideBar>
            <SideGroup items={drawTools} from={128} to={547} />
            <SideGroup items={pickTools} from={547} to={725} />
            <SideGroup items={snapTools} from={725} to={972} />
          </SideBar>
          <Mdi>
            <ChildWindow>
              <ChildTitle>
                <AppIcon />
                <ChildCaptions>
                  <Caption $gap={25}><Fit width={290}>Moment 3-3 Diagram</Fit></Caption>
                  <Caption $gap={29}><Fit width={50}>(W)</Fit></Caption>
                </ChildCaptions>
                <WindowButtons>
                  <WindowButton><MinIcon /></WindowButton>
                  <WindowButton><MaxIcon /></WindowButton>
                  <WindowButton $close><CloseIcon /></WindowButton>
                </WindowButtons>
              </ChildTitle>
              <Viewport>
                <Diagram />
                <Notes>
                  <Note $left={677} $color="#ff0000"><Fit width={564}>R<Sub>h</Sub> = P/2 = 5.1/2 = 2.55 k</Fit></Note>
                  <Note $left={663} $color="#ff0000"><Fit width={615}>M<Sub>sw</Sub> = 2.55(15) = 38.25 ft-k</Fit></Note>
                  <Note $left={278} $top={60} $color="#ffffff"><Fit width={1500}>Member stiffness does not influence lateral force distribution.</Fit></Note>
                </Notes>
              </Viewport>
              <ChildFoot />
            </ChildWindow>
          </Mdi>
        </Body>
        <StatusBar>
          <StatusText><Fit width={401}>Right Click on any Frame Element for detailed diagram</Fit></StatusText>
          <StatusButton><StepArrow /></StatusButton>
          <StatusButton><StepArrow right /></StatusButton>
          <Combo $width={125} $gap={1}><Fit width={66}>GLOBAL</Fit><ComboButton><DropMark /></ComboButton></Combo>
          <Combo $width={124} $gap={3}><Fit width={62}>Kip, ft, F</Fit><ComboButton><DropMark /></ComboButton></Combo>
        </StatusBar>
      </AppWindow>
    </Screen>
  );
}
